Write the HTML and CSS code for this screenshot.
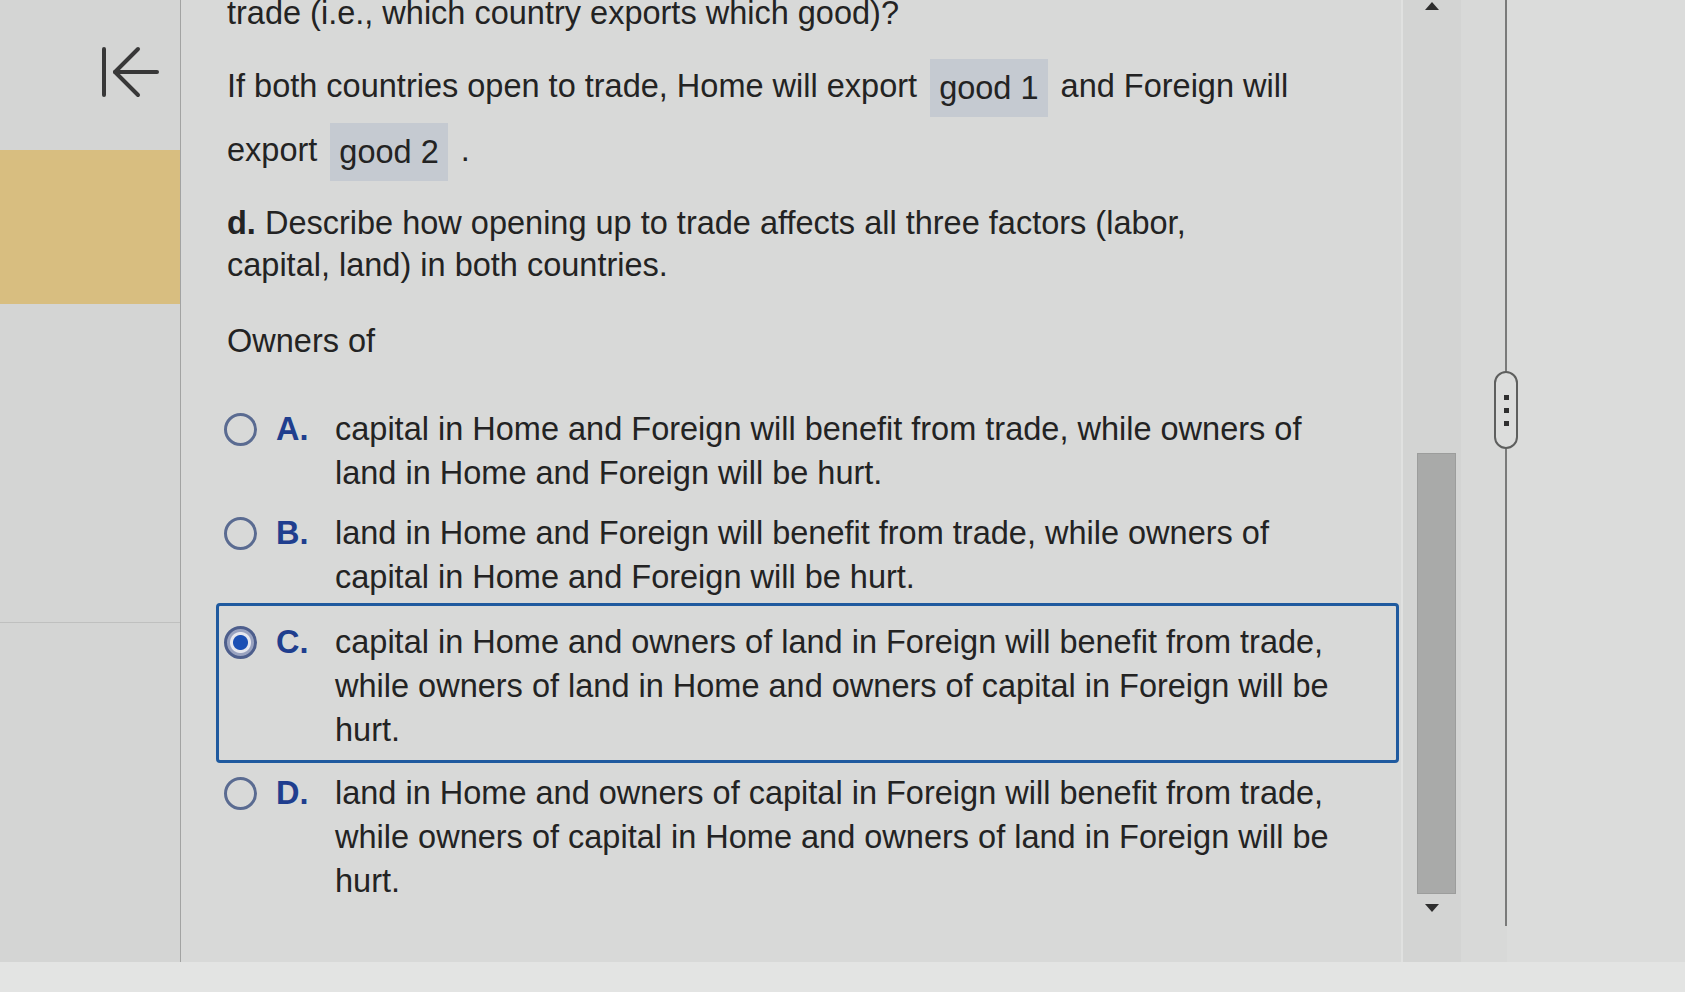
FILE: index.html
```html
<!DOCTYPE html>
<html>
<head>
    <title>Question</title>
    <meta name="viewport" content="width=device-width, initial-scale=1.0">
    <link rel="stylesheet" href="styles.css">
</head>
<body>
    <div class="screen">
        <aside class="sidebar">
            <button class="collapse-btn" title="Collapse">
                <svg width="60" height="52" viewBox="0 0 60 52" fill="none" stroke="#383838" stroke-width="4" stroke-linecap="round" stroke-linejoin="round">
                    <path d="M4 3 V49"/>
                    <path d="M38 3 L15 26 L38 49"/>
                    <path d="M15 26 H57"/>
                </svg>
            </button>
            <div class="sidebar-tab"></div>
            <div class="sidebar-rule"></div>
        </aside>

        <main class="question">
            <div class="question-body">
                <p class="prompt cut">trade (i.e., which country exports which good)?</p>
                <p class="prompt fill-line">If both countries open to trade, Home will export <span class="fill">good 1</span> and Foreign will export <span class="fill">good 2</span> .</p>
                <p class="prompt"><b>d.</b> Describe how opening up to trade affects all three factors (labor, capital, land) in both countries.</p>
                <p class="prompt stem">Owners of</p>

                <ul class="choices">
                    <li class="choice">
                        <span class="radio"></span>
                        <span class="letter">A.</span>
                        <span class="choice-text">capital in Home and Foreign will benefit from trade, while owners of land in Home and Foreign will be hurt.</span>
                    </li>
                    <li class="choice">
                        <span class="radio"></span>
                        <span class="letter">B.</span>
                        <span class="choice-text">land in Home and Foreign will benefit from trade, while owners of capital in Home and Foreign will be hurt.</span>
                    </li>
                    <li class="choice selected">
                        <span class="radio"></span>
                        <span class="letter">C.</span>
                        <span class="choice-text">capital in Home and owners of land in Foreign will benefit from trade, while owners of land in Home and owners of capital in Foreign will be hurt.</span>
                    </li>
                    <li class="choice">
                        <span class="radio"></span>
                        <span class="letter">D.</span>
                        <span class="choice-text">land in Home and owners of capital in Foreign will benefit from trade, while owners of capital in Home and owners of land in Foreign will be hurt.</span>
                    </li>
                </ul>
            </div>

            <div class="scrollbar">
                <span class="arrow up"></span>
                <div class="track">
                    <div class="thumb"></div>
                </div>
                <span class="arrow down"></span>
            </div>
        </main>

        <div class="splitter">
            <span class="grip"><i></i><i></i><i></i></span>
        </div>
        <section class="side-panel"></section>
    </div>
    <div class="bottom-bar"></div>
</body>
</html>
```

FILE: styles.css
```css
body {
    margin: 0;
    font-family: "Liberation Sans", Arial, sans-serif;
    background-color: #d8d9d8;
    color: #232323;
    overflow: hidden;
}
.screen {
    display: flex;
    height: 962px;
}

/* left navigation strip */
.sidebar {
    width: 180px;
    flex-shrink: 0;
    border-right: 1px solid #a2a3a2;
    background-color: #d4d5d4;
    display: flex;
    flex-direction: column;
}
.collapse-btn {
    align-self: flex-start;
    margin: 46px 0 0 100px;
    padding: 0;
    width: 60px;
    height: 52px;
    border: none;
    background: none;
    cursor: pointer;
}
.collapse-btn svg {
    display: block;
}
.sidebar-tab {
    margin-top: 52px;
    height: 154px;
    background-color: #d8be80;
}
.sidebar-rule {
    margin-top: 318px;
    border-top: 1px solid #bfc0bf;
}

/* question area */
.question {
    flex: 1;
    display: flex;
    min-width: 0;
}
.question-body {
    flex: 1;
    min-width: 0;
    padding: 0 2px 0 35px;
    overflow: hidden;
    font-size: 32.5px;
}
.prompt {
    margin: 0 0 20px 11px;
    max-width: 1065px;
    line-height: 42px;
}
.prompt.cut {
    margin-top: -8px;
}
.prompt.fill-line {
    line-height: 64px;
}
.prompt.stem {
    margin-top: 34px;
}
.fill {
    display: inline-block;
    height: 58px;
    line-height: 58px;
    padding: 0 9px;
    margin: 0 4px;
    vertical-align: middle;
    background-color: #c5cad1;
}

.choices {
    list-style: none;
    margin: 37px 0 0;
    padding: 0;
}
.choice {
    display: flex;
    align-items: flex-start;
    padding: 5px 54px 5px 5px;
    border: 3px solid transparent;
    border-radius: 4px;
    line-height: 44px;
}
.choice.selected {
    border-color: #1f5a9f;
    padding-top: 14px;
    padding-bottom: 8px;
    margin-top: -4px;
}
.radio {
    flex-shrink: 0;
    box-sizing: border-box;
    width: 33px;
    height: 33px;
    margin-top: 6px;
    border: 3px solid #5a6b91;
    border-radius: 50%;
}
.choice.selected .radio {
    border-color: #4d5e8c;
    background: radial-gradient(circle, #1b4fb4 0 7px, #e6e7ee 8px 10px, #9aa3c0 11px);
}
.letter {
    width: 59px;
    margin-left: 19px;
    flex-shrink: 0;
    font-weight: bold;
    color: #1f3e8e;
}
.choice-text {
    flex: 1;
}

/* vertical scrollbar */
.scrollbar {
    width: 58px;
    flex-shrink: 0;
    display: flex;
    flex-direction: column;
    align-items: center;
    background-color: #d3d4d3;
    border-left: 2px solid #e0e1e0;
}
.arrow {
    width: 0;
    height: 0;
    border-left: 7px solid transparent;
    border-right: 7px solid transparent;
}
.arrow.up {
    margin-top: 2px;
    border-bottom: 8px solid #2e2e2e;
}
.arrow.down {
    margin: 10px 0 50px;
    border-top: 8px solid #2e2e2e;
}
.track {
    flex: 1;
    display: flex;
    flex-direction: column;
    justify-content: flex-end;
    box-sizing: border-box;
    width: 100%;
    padding-left: 14px;
}
.thumb {
    width: 37px;
    height: 439px;
    background-color: #a9aaa9;
    border: 1px solid #9c9d9c;
}

/* panel divider with drag grip */
.splitter {
    position: relative;
    flex-shrink: 0;
    width: 2px;
    margin: 0 0 36px 44px;
    background-color: #7a7b7a;
}
.grip {
    position: absolute;
    top: 371px;
    left: -11px;
    box-sizing: border-box;
    width: 24px;
    height: 78px;
    border: 2px solid #5e5f5e;
    border-radius: 12px;
    background-color: #dcdddc;
    display: flex;
    flex-direction: column;
    align-items: center;
    justify-content: center;
    gap: 8px;
}
.grip i {
    width: 5px;
    height: 5px;
    background-color: #2f2f2f;
}
.side-panel {
    width: 178px;
    flex-shrink: 0;
    background-color: #dbdcdb;
}
.bottom-bar {
    height: 30px;
    background-color: #e3e4e3;
}
```
